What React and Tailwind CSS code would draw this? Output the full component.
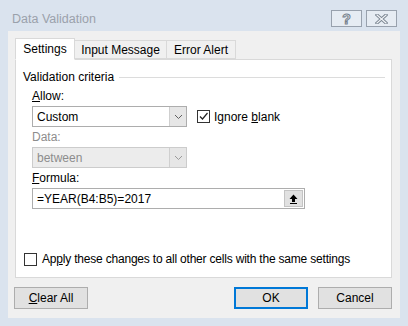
import { useState } from 'react'

const FONT = { fontFamily: '"Liberation Sans", Arial, sans-serif' }

function Chevron({ color = '#606060' }) {
  return (
    <svg width="9" height="6" viewBox="0 0 9 6">
      <path d="M1 1 L4.5 4.5 L8 1" fill="none" stroke={color} strokeWidth="1" />
    </svg>
  )
}

function Check() {
  return (
    <svg width="11" height="11" viewBox="0 0 11 11">
      <path d="M2 5.5 L4.5 8 L9.5 2" fill="none" stroke="#222" strokeWidth="1.2" />
    </svg>
  )
}

function Select({ value, disabled }) {
  return (
    <div className={`flex h-[21px] w-[155px] border ${disabled ? 'border-[#cccccc] bg-[#ececec]' : 'border-[#adadad] bg-white'}`}>
      <div className={`flex-1 flex items-center pl-[4px] text-[12px] ${disabled ? 'text-[#8d8d8d]' : 'text-black'}`}>{value}</div>
      <div className="w-[17px] flex items-center justify-center border-l border-[#cfcfcf] bg-[#e6e6e6]">
        <Chevron color={disabled ? '#9a9a9a' : '#606060'} />
      </div>
    </div>
  )
}

function Btn({ children, primary }) {
  return (
    <button className={`w-[74px] h-[22px] flex items-center justify-center text-[12px] text-black bg-[#e1e1e1] ${primary ? 'border-2 border-[#0078d7]' : 'border border-[#adadad]'}`}>
      {children}
    </button>
  )
}

const TABS = [
  { name: 'Settings', w: 'w-[60px]' },
  { name: 'Input Message', w: 'w-[92px]' },
  { name: 'Error Alert', w: 'w-[69px]' },
]

export default function App() {
  const [tab, setTab] = useState('Settings')
  const [ignore, setIgnore] = useState(true)
  const [apply, setApply] = useState(false)

  return (
    <div className="w-[408px] h-[326px] bg-[#dae3ee] flex flex-col px-[8px] pb-[8px] overflow-hidden" style={FONT}>
      {/* Title bar */}
      <div className="h-[31px] flex items-end justify-between pl-[4px] pr-[3px] pb-[4px] shrink-0">
        <span className="text-[12.5px] leading-[15px] text-[#9aa1ab]">Data Validation</span>
        <div className="flex gap-[4px]">
          <div className="w-[31px] h-[17px] border border-[#98a1ad] bg-[#e6ecf3] flex items-center justify-center text-[14px] font-bold text-[#eef2f7] [-webkit-text-stroke:1px_#76818d] leading-none">?</div>
          <div className="w-[31px] h-[17px] border border-[#98a1ad] bg-[#e6ecf3] flex items-center justify-center">
            <svg width="13" height="10" viewBox="0 0 13 10">
              <path d="M2 1 L11 9 M11 1 L2 9" stroke="#7c8793" strokeWidth="3.2" strokeLinecap="square" />
              <path d="M2 1 L11 9 M11 1 L2 9" stroke="#f4f6f9" strokeWidth="1.2" strokeLinecap="square" />
            </svg>
          </div>
        </div>
      </div>

      {/* Client area */}
      <div className="flex-1 bg-[#f0f0f0] flex flex-col pl-[7px] pr-[8px] pt-[7px]">
        {/* Tabs */}
        <div className="flex items-end h-[21px] relative z-10 text-[12px]">
          {TABS.map(({ name, w }) => (
            <button
              key={name}
              onClick={() => setTab(name)}
              className={
                tab === name
                  ? `${w} h-[22px] -mb-px bg-white border border-[#d9d9d9] border-b-white text-black`
                  : `${w} h-[19px] bg-[#f0f0f0] border border-[#d9d9d9] border-l-0 text-black`
              }
            >
              {name}
            </button>
          ))}
        </div>

        {/* Panel */}
        <div className="h-[219px] bg-white border border-[#d9d9d9] flex flex-col pl-[7px] pr-[6px] pt-[8px] text-[12px]">
          <div className="flex items-center">
            <span className="text-black">Validation criteria</span>
            <div className="flex-1 h-px bg-[#dcdcdc] ml-[5px]" />
          </div>

          <div className="pl-[9px] flex flex-col">
            <div className="mt-[3px] leading-[14px]"><span className="underline">A</span>llow:</div>
            <div className="mt-[3px] flex items-center">
              <Select value="Custom" />
              <button onClick={() => setIgnore(!ignore)} className="ml-[10px] flex items-center gap-[4px]">
                <span className="w-[13px] h-[13px] border border-[#333] bg-white flex items-center justify-center">
                  {ignore && <Check />}
                </span>
                <span>Ignore <span className="underline">b</span>lank</span>
              </button>
            </div>
            <div className="mt-[3px] leading-[14px] text-[#8d8d8d]">Data:</div>
            <div className="mt-[3px]"><Select value="between" disabled /></div>
            <div className="mt-[3px] leading-[14px]"><span className="underline">F</span>ormula:</div>
            <div className="mt-[3px] flex h-[21px] w-[273px] border border-[#adadad] bg-white">
              <div className="flex-1 flex items-center pl-[4px]">=YEAR(B4:B5)=2017</div>
              <div className="w-[19px] my-[1px] mr-[1px] bg-[#e1e1e1] border border-[#c4c4c4] flex items-center justify-center">
                <svg width="9" height="10" viewBox="0 0 9 10">
                  <path d="M4.5 0.5 L8.5 5 L6 5 L6 8 L3 8 L3 5 L0.5 5 Z" fill="#000" />
                  <rect x="1" y="9" width="7" height="1" fill="#000" />
                </svg>
              </div>
            </div>
          </div>

          <div className="flex-1" />
          <button onClick={() => setApply(!apply)} className="flex items-center gap-[5px] mb-[9px] ml-[1px]">
            <span className="w-[13px] h-[13px] border border-[#333] bg-white flex items-center justify-center">
              {apply && <Check />}
            </span>
            <span className="tracking-[-0.2px]">Ap<span className="underline">p</span>ly these changes to all other cells with the same settings</span>
          </button>
        </div>

        {/* Buttons */}
        <div className="flex mt-[9px] -ml-px">
          <Btn><span><span className="underline">C</span>lear All</span></Btn>
          <div className="flex-1" />
          <Btn primary>OK</Btn>
          <div className="w-[10px]" />
          <Btn>Cancel</Btn>
        </div>
      </div>
    </div>
  )
}
